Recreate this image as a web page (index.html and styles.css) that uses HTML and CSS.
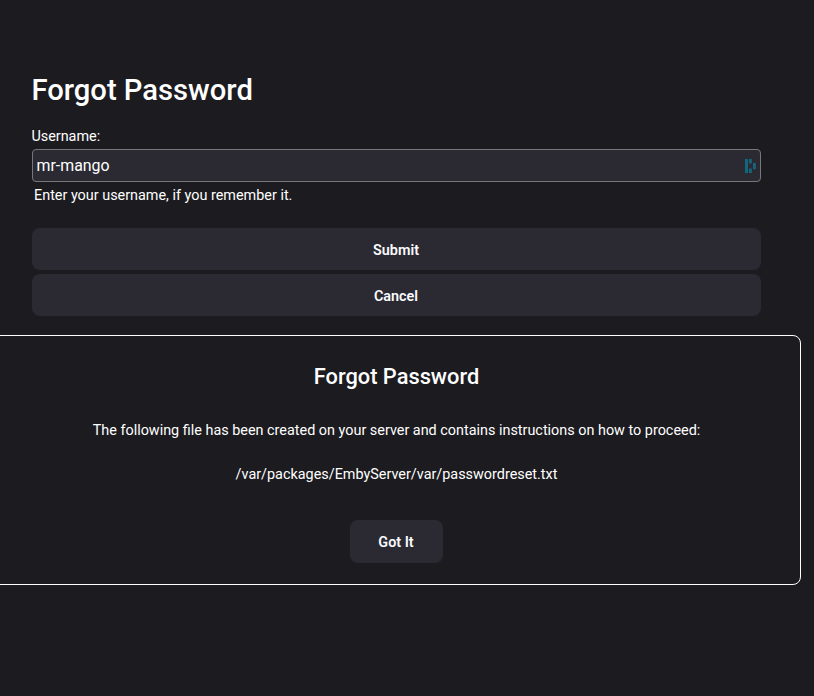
FILE: index.html
```html
<!DOCTYPE html>
<html lang="en">
<head>
<meta charset="utf-8">
<title>Forgot Password</title>
<link rel="stylesheet" href="styles.css">
</head>
<body>
<main class="page">
  <form class="form">
    <h1 class="title">Forgot Password</h1>
    <label class="label" for="user">Username:</label>
    <div class="field">
      <input class="input" id="user" type="text" value="mr-mango">
      <svg class="field-icon" width="11" height="14" viewBox="0 0 11 14" fill="#13667c" aria-hidden="true">
        <path d="M0 0h3v14H0zM4 0h2.8v4.4H4zM4 9.6h2.8V14H4zM8 4h2.8v6.3H8z"/>
      </svg>
    </div>
    <p class="hint">Enter your username, if you remember it.</p>
    <button class="button" type="button">Submit</button>
    <button class="button" type="button">Cancel</button>
  </form>
  <section class="dialog">
    <h2 class="dialog-title">Forgot Password</h2>
    <p class="dialog-text">The following file has been created on your server and contains instructions on how to proceed:</p>
    <p class="dialog-path">/var/packages/EmbyServer/var/passwordreset.txt</p>
    <button class="button confirm" type="button">Got It</button>
  </section>
</main>
</body>
</html>
```
FILE: styles.css
```css
* { box-sizing: border-box; }
body { margin: 0; background: #1c1b20; color: #fff; font: 14.4px/20px Roboto, sans-serif; }
h1, h2, p { margin: 0; font-weight: 500; }
p { font-weight: 400; }
.page { height: 696px; padding-top: 70px; overflow: hidden; }
.form { display: flex; flex-direction: column; width: 729px; margin-left: 32px; }
.title { margin-left: -0.6px; font-size: 29.2px; line-height: 40px; }
.label { margin-top: 17px; margin-left: -0.6px; height: 22px; }
.field { display: flex; align-items: center; height: 33px; padding: 0 4px 0 3.5px; border: 1px solid #77767b; border-radius: 4px; background: #2b2a33; }
.input { flex: 1; padding: 0; border: 0; outline: 0; background: transparent; color: #fff; font: 15.9px/20px Roboto, sans-serif; }
.hint { margin: 4px 0 22px 2px; }
.button { height: 42px; margin-bottom: 4px; padding: 3px 1px 0 0; border: 0; border-radius: 8px; background: #2b2a33; color: #fbfbfe; font: 600 14.4px/20px Roboto, sans-serif; }
.dialog { display: flex; flex-direction: column; align-items: center; width: 809px; height: 250px; margin: 15px 0 0 -8px; padding-top: 26px; border: 1px solid #fff; border-radius: 8px; text-align: center; }
.dialog-title { font-size: 21.8px; line-height: 30px; }
.dialog-text { margin-top: 29px; }
.dialog-path { margin-top: 24px; }
.confirm { width: 93px; height: 43px; margin-top: 35px; padding-top: 2px; }
```
